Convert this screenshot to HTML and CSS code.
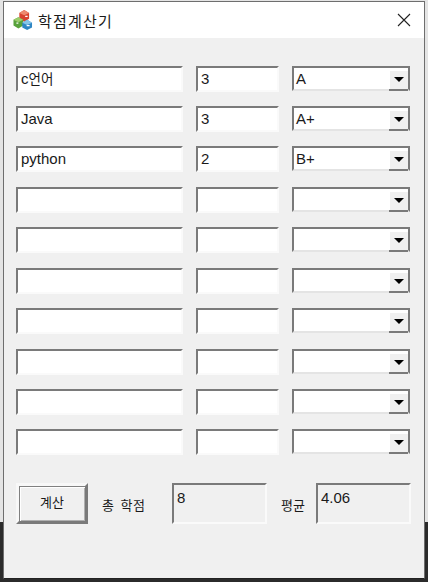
FILE: index.html
```html
<!DOCTYPE html>
<html lang="ko">
<head>
  <meta charset="UTF-8" />
  <title>학점계산기</title>
  <link rel="stylesheet" href="styles.css">
</head>
<body>
  <div class="window">
    <div class="titlebar">
      <svg class="app-icon" width="20" height="20" viewBox="1 1 19.5 20.5">
        <polygon points="7,4 12,1 17,4 17,10 12,13 7,10" fill="#d8432f"/>
        <polygon points="7,4 12,1 17,4 12,6.5" fill="#ee8a70"/>
        <polygon points="1,11 6,8.5 11,11 11,17 6,20 1,17" fill="#58a23c"/>
        <polygon points="1,11 6,8.5 11,11 6,13.5" fill="#9ccd6c"/>
        <polygon points="10,14 15,11 20,14 20,19 15,21.5 10,19" fill="#2f86c4"/>
        <polygon points="10,14 15,11 20,14 15,16.5" fill="#86c4e8"/>
        <path d="M13 7.5 h2.5 M4 14.5 h2 M14.5 17 h3" stroke="#fff" stroke-width="1.2" fill="none"/>
      </svg>
      <span class="title">학점계산기</span>
      <svg class="close" width="14" height="14" viewBox="0 0 14 14">
        <path d="M1 1 L13 13 M13 1 L1 13" stroke="#222" stroke-width="1.1" fill="none"/>
      </svg>
    </div>

    <div class="form">
      <div class="rows">
        <div class="field">c<span class="ko">언어</span></div>
        <div class="field">3</div>
        <div class="combo"><span class="combo-text">A</span><span class="arrow"></span></div>

        <div class="field">Java</div>
        <div class="field">3</div>
        <div class="combo"><span class="combo-text">A+</span><span class="arrow"></span></div>

        <div class="field">python</div>
        <div class="field">2</div>
        <div class="combo"><span class="combo-text">B+</span><span class="arrow"></span></div>

        <div class="field"></div><div class="field"></div><div class="combo"><span class="combo-text"></span><span class="arrow"></span></div>
        <div class="field"></div><div class="field"></div><div class="combo"><span class="combo-text"></span><span class="arrow"></span></div>
        <div class="field"></div><div class="field"></div><div class="combo"><span class="combo-text"></span><span class="arrow"></span></div>
        <div class="field"></div><div class="field"></div><div class="combo"><span class="combo-text"></span><span class="arrow"></span></div>
        <div class="field"></div><div class="field"></div><div class="combo"><span class="combo-text"></span><span class="arrow"></span></div>
        <div class="field"></div><div class="field"></div><div class="combo"><span class="combo-text"></span><span class="arrow"></span></div>
        <div class="field"></div><div class="field"></div><div class="combo"><span class="combo-text"></span><span class="arrow"></span></div>
      </div>

      <div class="footer">
        <button class="calc">계산</button>
        <span class="label label-total">총 학점</span>
        <div class="result result-total">8</div>
        <span class="label label-avg">평균</span>
        <div class="result">4.06</div>
      </div>
    </div>
  </div>
</body>
</html>
```

FILE: styles.css
```css
html, body {
  margin: 0;
  height: 582px;
  overflow: hidden;
}

body {
  /* desktop behind the window: pale up top, dark taskbar area below */
  background: linear-gradient(to bottom, #e4e4e4 0, #e4e4e4 522px, #2b2b2b 522px, #2b2b2b 100%);
  font-family: "Liberation Sans", "Noto Sans CJK KR", sans-serif;
  font-size: 15px;
  color: #1a1a1a;
  padding: 1px 0 0 3px;
  box-sizing: border-box;
}

.window {
  width: 422px;
  height: 578px;
  box-sizing: border-box;
  border: 1px solid #6e6e6e;
  border-bottom-color: #222;
  background: #f0f0f0;
}

.titlebar {
  display: flex;
  align-items: center;
  height: 36px;
  background: #fff;
  padding: 0 13px 0 9px;
}

.app-icon {
  margin-right: 5px;
}

.title {
  flex: 1;
  font-size: 15px;
  letter-spacing: 1.2px;
}

.form {
  padding: 27.5px 13px 0 12px;
}

.rows {
  display: grid;
  grid-template-columns: 167px 83px 118px;
  column-gap: 13px;
  row-gap: 14.44px;
}

.field,
.combo,
.result {
  box-sizing: border-box;
  border: 2px solid;
  border-color: #7a7a7a #fafafa #fafafa #7a7a7a;
}

.ko {
  font-size: 13.5px;
}

.field {
  height: 26px;
  background: #fff;
  padding: 2px 3px;
  line-height: 18px;
}

.combo {
  display: flex;
  height: 25px;
  background: #fff;
  border-right-color: #7a7a7a;
  border-bottom-color: #e4e4e4;
}

.combo-text {
  flex: 1;
  padding: 1px 2px;
  line-height: 19px;
}

.arrow {
  position: relative;
  width: 19px;
  height: 19px;
  margin-top: 2px;
  background: #f0f0f0;
  border-bottom: 2px solid #7a7a7a;
  box-shadow: inset 1px 1px 0 #fff;
}

.arrow::after {
  content: "";
  position: absolute;
  left: 5px;
  top: 7px;
  border: 5px solid transparent;
  border-top: 5px solid #000;
  border-bottom: 0;
}

.footer {
  display: flex;
  align-items: flex-start;
  margin-top: 27.5px;
}

.calc {
  width: 72px;
  height: 41px;
  box-sizing: border-box;
  background: #f0f0f0;
  border: 3px solid;
  border-color: #f8f8f8 #7a7a7a #7a7a7a #f8f8f8;
  box-shadow: inset 1px 1px 0 #808080, inset 2px 2px 0 #fff, inset -1px -1px 0 #b0b0b0;
  padding: 0 0 4px;
  font: inherit;
  font-size: 13px;
  color: #1a1a1a;
}

.label {
  font-size: 13px;
  line-height: 18px;
  margin-top: 14px;
}

.label-total {
  margin-left: 14px;
  width: 70px;
  word-spacing: 2px;
  letter-spacing: 0.5px;
}

.label-avg {
  margin-left: 14px;
  width: 35px;
}

.result {
  width: 95px;
  height: 41px;
  padding: 4px 3px;
  line-height: 18px;
  background: #f0f0f0;
}
```
